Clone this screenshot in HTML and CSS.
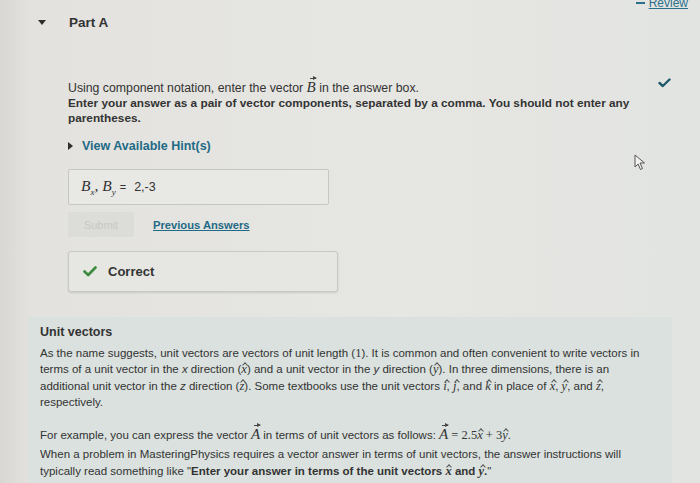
FILE: index.html
```html
<!DOCTYPE html>
<html>
<head>
<meta charset="utf-8">
<link rel="stylesheet" href="styles.css">
</head>
<body>
<div class="screen">
  <div class="topbar"><a class="review" href="#"><span class="review-icon"></span>Review</a></div>
  <div class="part-header">
    <span class="caret-down"></span>
    <span class="part-title">Part A</span>
  </div>
  <div class="part-body">
    <div class="main">
      <p class="prompt">Using component notation, enter the vector <span class="vec">B</span> in the answer box.</p>
      <p class="instruct">Enter your answer as a pair of vector components, separated by a comma. You should not enter any parentheses.</p>
      <div class="hint"><span class="caret-right"></span><a href="#">View Available Hint(s)</a></div>
      <div class="answer-box"><span class="math">B<sub>x</sub>, B<sub>y</sub></span><span class="eq">=</span>2,-3</div>
      <div class="actions">
        <span class="submit">Submit</span>
        <a class="prev" href="#">Previous Answers</a>
      </div>
      <div class="correct">
        <svg class="ok" width="14" height="11" viewBox="0 0 14 11"><path d="M1.5 5.5 L5.2 9 L12.5 1.5" fill="none" stroke="#3b8a3e" stroke-width="2.6" stroke-linecap="round" stroke-linejoin="round"/></svg>
        <span>Correct</span>
      </div>
    </div>
    <div class="status">
      <svg width="13" height="10" viewBox="0 0 13 10"><path d="M1.5 5 L4.8 8 L11.5 1.5" fill="none" stroke="#1f5a6a" stroke-width="2.4" stroke-linecap="round" stroke-linejoin="round"/></svg>
    </div>
  </div>
  <div class="unit-panel">
    <h3>Unit vectors</h3>
    <p class="p1">As the name suggests, unit vectors are vectors of unit length (<span class="m">1</span>). It is common and often convenient to write vectors in terms of a unit vector in the <i>x</i> direction (<span class="hat">x</span>) and a unit vector in the <i>y</i> direction (<span class="hat">y</span>). In three dimensions, there is an additional unit vector in the <i>z</i> direction (<span class="hat">z</span>). Some textbooks use the unit vectors <span class="hat">i</span>, <span class="hat">j</span>, and <span class="hat">k</span> in place of <span class="hat">x</span>, <span class="hat">y</span>, and <span class="hat">z</span>, respectively.</p>
    <p class="p2">For example, you can express the vector <span class="vec">A</span> in terms of unit vectors as follows: <span class="vec">A</span><span class="m"> = 2.5<span class="hat">x</span> + 3<span class="hat">y</span></span>.</p>
    <p class="p3">When a problem in MasteringPhysics requires a vector answer in terms of unit vectors, the answer instructions will typically read something like "<b>Enter your answer in terms of the unit vectors <span class="hat">x</span> and <span class="hat">y</span>.</b>"</p>
  </div>
  <svg class="cursor" width="12" height="17" viewBox="0 0 12 17"><path d="M1 1 L1 13 L4 10 L6.5 15.5 L8.5 14.5 L6 9 L10.5 9 Z" fill="#f2f2f0" stroke="#555" stroke-width="1"/></svg>
</div>
</body>
</html>
```
FILE: styles.css
```css
* { box-sizing: border-box; }
html, body { margin: 0; padding: 0; }
body {
  width: 700px;
  height: 483px;
  overflow: hidden;
  font-family: "Liberation Sans", Arial, sans-serif;
  color: #333333;
  background: #e4e3df;
}
.screen {
  position: relative;
  width: 700px;
  height: 483px;
  background: linear-gradient(90deg, #d9d7d3 0px, #e3e2de 30px, #e6e6e2 400px, #e2e4e1 700px);
}
.topbar {
  height: 9px;
  display: flex;
  justify-content: flex-end;
  align-items: flex-end;
  overflow: hidden;
  padding-right: 12px;
}
.review {
  display: flex;
  align-items: center;
  gap: 4px;
  color: #2a6f8c;
  font-size: 12px;
  line-height: 12px;
  text-decoration: underline;
}
.review-icon {
  width: 9px;
  height: 2px;
  background: #2a6f8c;
}
.part-header {
  display: flex;
  align-items: center;
  padding: 0 0 0 38px;
  gap: 23px;
  height: 26px;
}
.caret-down {
  width: 0; height: 0;
  border-left: 4.5px solid transparent;
  border-right: 4.5px solid transparent;
  border-top: 5px solid #2e2e2e;
}
.part-title {
  font-weight: bold;
  font-size: 13.5px;
}
.part-body {
  display: flex;
  padding-left: 68px;
  padding-top: 45px;
}
.main { width: 590px; }
.status { margin-top: -6px; }
.prompt {
  margin: 0;
  font-size: 12.3px;
  line-height: 15px;
}
.vec {
  position: relative;
  font-family: "Liberation Serif", "DejaVu Serif", serif;
  font-style: italic;
  font-size: 15px;
  line-height: 1;
}
.vec::before {
  content: "";
  position: absolute;
  left: 3px; right: 0px;
  top: -1px;
  height: 1px;
  background: #444;
}
.vec::after {
  content: "";
  position: absolute;
  right: -1px;
  top: -3px;
  border-left: 4px solid #444;
  border-top: 2.5px solid transparent;
  border-bottom: 2.5px solid transparent;
}
.instruct {
  margin: 0;
  font-weight: bold;
  font-size: 11.8px;
  line-height: 14.5px;
}
.hint {
  margin-top: 10px;
  display: flex;
  align-items: center;
  gap: 9px;
  height: 22px;
}
.caret-right {
  width: 0; height: 0;
  border-top: 4.5px solid transparent;
  border-bottom: 4.5px solid transparent;
  border-left: 5px solid #2e2e2e;
}
.hint a {
  color: #1f6a86;
  font-weight: bold;
  font-size: 12.5px;
  text-decoration: none;
}
.answer-box {
  margin-top: 12px;
  width: 261px;
  height: 36px;
  border: 1px solid #c6c6c2;
  border-radius: 2px;
  background: #e8e8e5;
  display: flex;
  align-items: center;
  padding-left: 12px;
  font-size: 12.5px;
}
.math {
  font-family: "Liberation Serif", "DejaVu Serif", serif;
  font-style: italic;
  font-size: 15.5px;
}
.math sub { font-size: 9px; }
.eq { font-size: 11px; margin: 0 8px 0 4px; }
.actions {
  margin-top: 7px;
  display: flex;
  align-items: center;
  gap: 19px;
}
.submit {
  width: 66px;
  height: 25px;
  background: #dcdcd8;
  border-radius: 2px;
  color: #c8c8c5;
  font-size: 11px;
  display: flex;
  align-items: center;
  justify-content: center;
}
.prev {
  color: #1f6a86;
  font-weight: bold;
  font-size: 11.2px;
  text-decoration: underline;
}
.correct {
  margin-top: 14px;
  width: 270px;
  height: 41px;
  border: 1px solid #c8c8c4;
  border-radius: 3px;
  background: #e6e6e2;
  box-shadow: 0 1px 2px rgba(0,0,0,0.12);
  display: flex;
  align-items: center;
  padding-left: 14px;
  gap: 11px;
  font-weight: bold;
  font-size: 13px;
}
.unit-panel {
  margin: 25px 0 0 28px;
  width: 644px;
  height: 200px;
  background: #dae1de;
  padding: 7px 12px;
  font-size: 11.5px;
  line-height: 16.5px;
}
.unit-panel h3 {
  margin: 0 0 4px;
  font-size: 12.5px;
  font-weight: bold;
}
.unit-panel p { margin: 0; }
.unit-panel .p1 { margin-bottom: 16px; }
.unit-panel .p2 { margin-bottom: 3px; }
.m {
  font-family: "Liberation Serif", "DejaVu Serif", serif;
  font-size: 12.5px;
  line-height: 1;
}
.hat {
  position: relative;
  font-family: "Liberation Serif", "DejaVu Serif", serif;
  font-style: italic;
  font-size: 12.5px;
  line-height: 1;
}
.hat::before {
  content: "";
  position: absolute;
  left: 2px;
  top: 1px;
  width: 3px;
  height: 3px;
  border-left: 1px solid #555;
  border-top: 1px solid #555;
  transform: rotate(45deg);
}
.cursor {
  position: absolute;
  left: 634px;
  top: 154px;
}
```
